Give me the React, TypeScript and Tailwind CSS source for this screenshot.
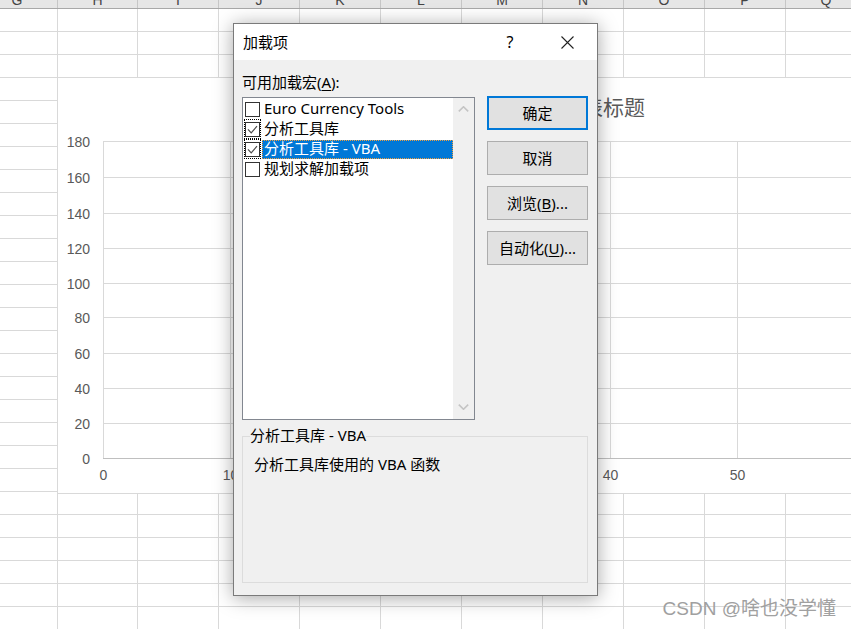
import React from "react";

const cols = ["G", "H", "I", "J", "K", "L", "M", "N", "O", "P", "Q"];
const rows = Array.from({ length: 27 }, (_, i) => i);

// page coords -> chart svg coords (chart inner origin at 58,78)
const cx = (x: number) => x - 58;
const cy = (y: number) => y - 78;

const yGrid = [141, 177, 213, 248, 283, 317, 353, 388, 423, 458];
const yLabels = ["180", "160", "140", "120", "100", "80", "60", "40", "20", "0"];
const xGrid = [103, 230, 357, 484, 610, 737, 864];
const xLabels: Record<number, string> = { 103: "0", 230: "10", 610: "40", 737: "50" };

function Check() {
  return (
    <svg width="11" height="11" viewBox="0 0 11 11">
      <polyline points="1,5.4 4.2,8.8 10,2.2" fill="none" stroke="#4a4a4a" strokeWidth="1.2" />
    </svg>
  );
}

function Item({ text, checked, focus, selected }: { text: string; checked?: boolean; focus?: boolean; selected?: boolean }) {
  return (
    <div className="flex h-[20px] items-center pl-[1px]">
      <div
        className={
          focus
            ? "flex h-[20px] w-[17px] shrink-0 items-center justify-center border border-dotted border-black"
            : "flex h-[20px] w-[17px] shrink-0 items-center justify-center border border-transparent"
        }
      >
        <div className="flex h-[15px] w-[15px] shrink-0 items-center justify-center border border-[#333] bg-white">
          {checked ? <Check /> : null}
        </div>
      </div>
      <span
        className={
          selected
            ? "ml-[1px] flex h-[19px] flex-1 items-center bg-[#0078d7] pb-[2px] pl-[2px] leading-[19px] text-white outline-1 outline-dotted -outline-offset-1 outline-[#f0a040]"
            : "ml-[1px] flex h-[19px] flex-1 items-center pb-[2px] pl-[2px] leading-[19px]"
        }
      >
        {text}
      </span>
    </div>
  );
}

export default function App() {
  return (
    <div className="relative h-[629px] w-[851px] overflow-hidden bg-white">
      {/* spreadsheet grid */}
      <div className="ml-[-23px] flex flex-col">
        <div className="flex h-[9px] border-b border-[#a8a8a8] bg-[#e6e6e6]">
          {cols.map((c) => (
            <div
              key={c}
              className={
                (c === "H" ? "w-[80px] " : "w-[81px] ") +
                "flex shrink-0 items-end justify-center overflow-hidden border-r border-[#c6c6c6]"
              }
            >
              <span className="mb-[1px] font-['Liberation_Sans',sans-serif] text-[14px] leading-[14px] text-[#444]">{c}</span>
            </div>
          ))}
        </div>
        {rows.map((r) => (
          <div key={r} className="flex h-[23px]">
            {cols.map((c) => (
              <div
                key={c}
                className={(c === "H" ? "w-[80px] " : "w-[81px] ") + "shrink-0 border-r border-b border-[#d9d9d9]"}
              />
            ))}
          </div>
        ))}
      </div>

      {/* chart object */}
      <div className="absolute left-[57px] top-[77px] h-[417px] w-[1100px] border border-[#d9d9d9] bg-white">
        <svg width="1098" height="415" className="block">
          <text
            x={cx(603)}
            y={cy(106)}
            textAnchor="middle"
            dominantBaseline="central"
            fontSize="21"
            fill="#595959"
            fontFamily="'Noto Sans CJK SC', sans-serif"
          >
            图表标题
          </text>
          {yGrid.map((y, i) => (
            <g key={y}>
              <line
                x1={cx(103)}
                x2={1098}
                y1={cy(y) + 0.5}
                y2={cy(y) + 0.5}
                stroke={i === yGrid.length - 1 ? "#bfbfbf" : "#d9d9d9"}
                strokeWidth="1"
              />
              <text
                x={cx(90)}
                y={cy(y) + 1}
                textAnchor="end"
                dominantBaseline="central"
                fontSize="14"
                fill="#595959"
                fontFamily="'Liberation Sans', sans-serif"
              >
                {yLabels[i]}
              </text>
            </g>
          ))}
          {xGrid.map((x) => (
            <g key={x}>
              <line x1={cx(x) + 0.5} x2={cx(x) + 0.5} y1={cy(141)} y2={cy(458)} stroke="#d9d9d9" strokeWidth="1" />
              {xLabels[x] ? (
                <text
                  x={cx(x) + 0.5}
                  y={cy(475)}
                  textAnchor="middle"
                  dominantBaseline="central"
                  fontSize="14"
                  fill="#595959"
                  fontFamily="'Liberation Sans', sans-serif"
                >
                  {xLabels[x]}
                </text>
              ) : null}
            </g>
          ))}
        </svg>
      </div>

      {/* dialog */}
      <div className="absolute left-[233px] top-[23px] flex h-[573px] w-[365px] flex-col border border-[#7a7a7a] bg-[#f0f0f0] font-['Noto_Sans','Noto_Sans_CJK_SC',sans-serif] text-[15px] text-black shadow-[0_2px_18px_rgba(0,0,0,0.35)]">
        <div className="flex h-[36px] shrink-0 items-center bg-white pl-[9px] pr-[20px]">
          <span className="leading-[20px]">加载项</span>
          <span className="ml-auto w-[20px] text-center text-[16px] leading-[20px]">?</span>
          <span className="ml-[37px] flex h-[20px] w-[20px] items-center justify-center">
            <svg width="13" height="13" viewBox="0 0 13 13">
              <path d="M0.5 0.5 L12.5 12.5 M12.5 0.5 L0.5 12.5" stroke="#222" strokeWidth="1.1" fill="none" />
            </svg>
          </span>
        </div>
        <div className="flex flex-1 flex-col px-[8px] pt-[12px]">
          <div className="h-[20px] leading-[20px]">
            可用加载宏(<span className="underline underline-offset-2">A</span>):
          </div>
          <div className="mt-[5px] flex">
            <div className="flex h-[323px] w-[233px] shrink-0 border border-[#828790]">
              <div className="flex w-[210px] shrink-0 flex-col bg-white pt-[1px]">
                <Item text="Euro Currency Tools" />
                <Item text="分析工具库" checked focus />
                <Item text="分析工具库 - VBA" checked focus selected />
                <Item text="规划求解加载项" />
              </div>
              <div className="flex flex-1 flex-col items-center justify-between bg-[#f0f0f0] pb-[9px] pt-[8px]">
                <svg width="11" height="6" viewBox="0 0 11 6">
                  <polyline points="0.8,5.4 5.5,0.8 10.2,5.4" fill="none" stroke="#c4c4c4" strokeWidth="1.6" />
                </svg>
                <svg width="11" height="6" viewBox="0 0 11 6">
                  <polyline points="0.8,0.6 5.5,5.2 10.2,0.6" fill="none" stroke="#c4c4c4" strokeWidth="1.6" />
                </svg>
              </div>
            </div>
            <div className="-mt-[1px] ml-[12px] flex flex-col gap-[11px]">
              <button className="flex h-[34px] w-[101px] items-center justify-center border-2 border-[#0078d7] bg-[#e1e1e1] leading-[20px]">
                确定
              </button>
              <button className="flex h-[34px] w-[101px] items-center justify-center border border-[#adadad] bg-[#e1e1e1] leading-[20px]">
                取消
              </button>
              <button className="flex h-[34px] w-[101px] items-center justify-center border border-[#adadad] bg-[#e1e1e1] leading-[20px]">
                浏览(<span className="underline underline-offset-2">B</span>)...
              </button>
              <button className="flex h-[34px] w-[101px] items-center justify-center border border-[#adadad] bg-[#e1e1e1] leading-[20px]">
                自动化(<span className="underline underline-offset-2">U</span>)...
              </button>
            </div>
          </div>
          <fieldset className="mt-[5px] h-[158px] w-[346px] border border-[#dcdcdc] px-[7px]">
            <legend className="pb-[2px] leading-[20px]">分析工具库 - VBA</legend>
            <div className="ml-[4px] mt-[7px] leading-[20px]">分析工具库使用的 VBA 函数</div>
          </fieldset>
        </div>
      </div>

      {/* watermark */}
      <div className="absolute right-[15px] top-[597px] font-['Liberation_Sans','Noto_Sans_CJK_SC',sans-serif] text-[19px] leading-[24px] text-[#a0a0a0]">
        CSDN @啥也没学懂
      </div>
    </div>
  );
}
